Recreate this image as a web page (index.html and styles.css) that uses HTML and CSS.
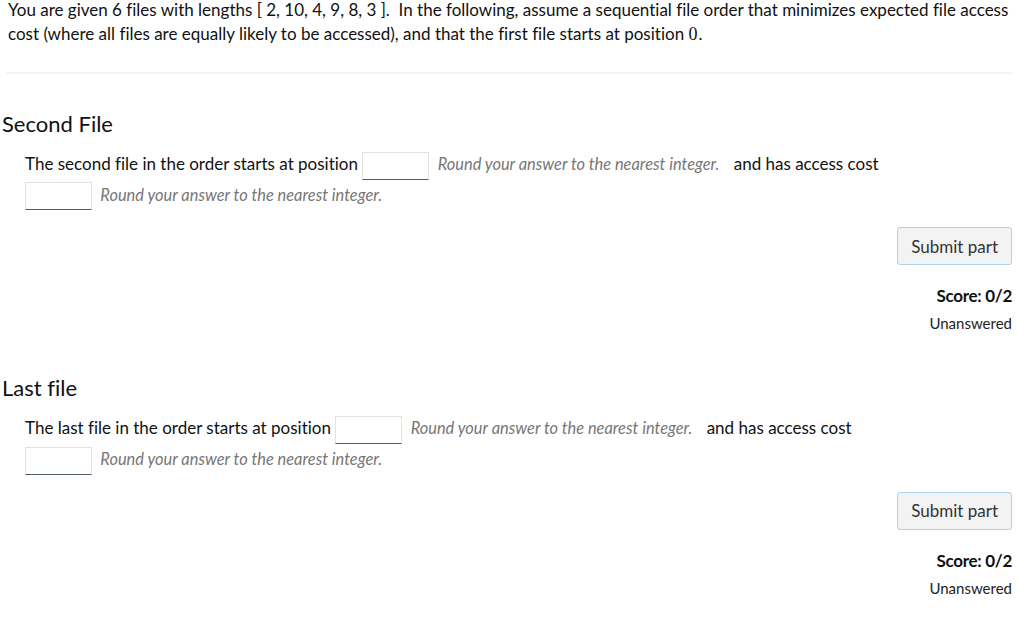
FILE: index.html
```html
<!DOCTYPE html>
<html>
<head>
<meta charset="utf-8">
<link rel="stylesheet" href="styles.css">
</head>
<body>
<div class="page">
  <div class="statement">
    <p>You are given 6 files with lengths [ 2, 10, 4, 9, 8, 3 ].&nbsp; In the following, assume a sequential file order that minimizes expected file access cost (where all files are equally likely to be accessed), and that the first file starts at position <span class="math">0</span>.</p>
  </div>
  <hr class="divider">

  <section class="part">
    <h3 class="part-title">Second File</h3>
    <div class="part-body">
      <p class="prompt">The second file in the order starts at position <span class="field"><input class="answer" type="text"> <span class="hint">Round your answer to the nearest integer.</span></span> <span class="gap"></span>and has access cost <span class="field"><input class="answer" type="text"> <span class="hint">Round your answer to the nearest integer.</span></span></p>
    </div>
    <div class="part-footer">
      <button class="submit">Submit part</button>
      <div class="score">Score: 0/2</div>
      <div class="status">Unanswered</div>
    </div>
  </section>

  <section class="part">
    <h3 class="part-title">Last file</h3>
    <div class="part-body">
      <p class="prompt">The last file in the order starts at position <span class="field"><input class="answer" type="text"> <span class="hint">Round your answer to the nearest integer.</span></span> <span class="gap"></span>and has access cost <span class="field"><input class="answer" type="text"> <span class="hint">Round your answer to the nearest integer.</span></span></p>
    </div>
    <div class="part-footer">
      <button class="submit">Submit part</button>
      <div class="score">Score: 0/2</div>
      <div class="status">Unanswered</div>
    </div>
  </section>
</div>
</body>
</html>
```
FILE: styles.css
```css
html, body {
  margin: 0;
  padding: 0;
  background: #fff;
}
body {
  font-family: "Lato", "Open Sans", sans-serif;
  font-size: 17px;
  color: #111;
  font-variant-ligatures: none;
}
.page {
  padding: 0 12px 0 2px;
}
.statement {
  padding-left: 6px;
}
.statement p {
  margin: -2px 0 0 0;
  line-height: 24px;
}
.math {
  display: inline-block;
  font-family: "Liberation Serif", serif;
  font-size: 18px;
  line-height: 18px;
  margin: 0 1px 0 0;
}
.divider {
  margin: 26px 0 0 4px;
  border: 0;
  border-top: 2px solid #f4f4f4;
  height: 0;
}
.part-title {
  margin: 37px 0 0 0;
  font-weight: normal;
  font-size: 22px;
  line-height: 26px;
  color: #111;
}
.part-body {
  padding-left: 23px;
  margin-top: 12px;
}
.prompt {
  margin: 0;
  line-height: 30px;
}
.field {
  white-space: nowrap;
}
.answer {
  box-sizing: border-box;
  width: 67px;
  height: 28px;
  border: 1px solid #e2e2e2;
  border-bottom: 1px solid #4f5d6b;
  padding: 0 4px;
  margin: 0;
  vertical-align: middle;
  font: inherit;
  background: #fff;
}
.hint {
  font-style: italic;
  color: #777;
  font-size: 16.4px;
  margin-left: 4px;
}
.gap {
  display: inline-block;
  width: 10px;
}
.part-footer {
  display: flex;
  flex-direction: column;
  align-items: flex-end;
  margin-top: 17px;
}
.submit {
  box-sizing: border-box;
  height: 38px;
  padding: 0 13px;
  font: inherit;
  font-size: 17px;
  color: #333;
  background: #f3f3f3;
  border: 1px solid #a9d3f0;
  border-radius: 3px;
}
.score {
  margin-top: 19px;
  font-weight: bold;
  line-height: 24px;
  letter-spacing: -0.3px;
}
.status {
  margin-top: 5px;
  font-size: 15px;
  line-height: 20px;
  color: #222;
}
.part + .part .part-title {
  margin-top: 42px;
}
```
